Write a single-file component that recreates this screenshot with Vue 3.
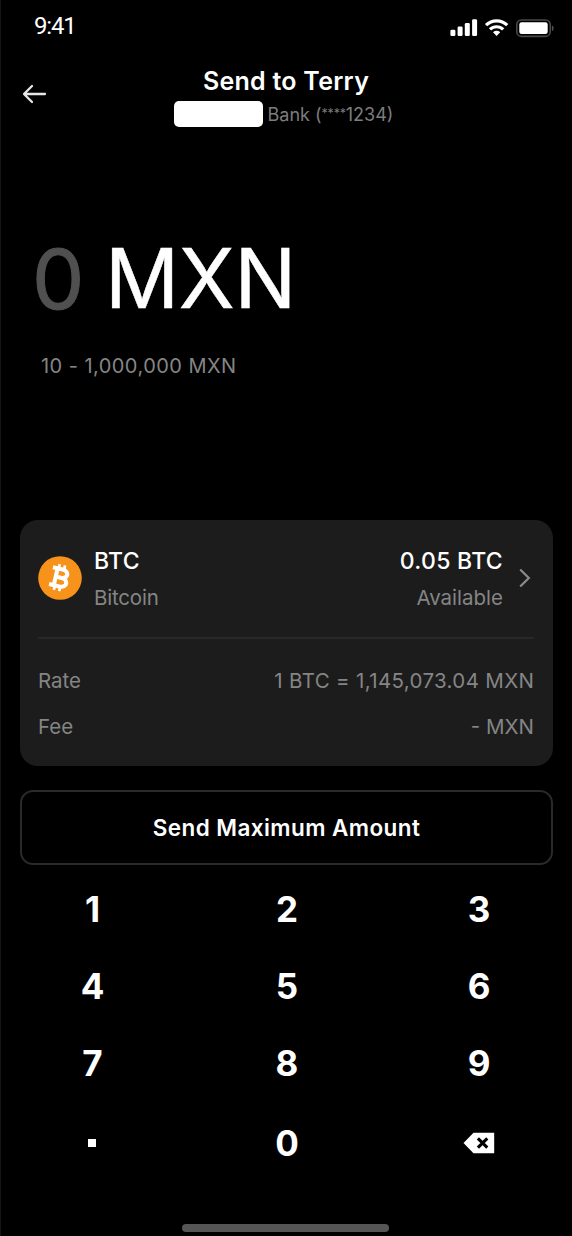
<script setup>
const keys = ['1', '2', '3', '4', '5', '6', '7', '8', '9']
</script>

<template>
  <main class="screen">
    <header class="status">
      <span class="time">9:41</span>
      <svg class="status-icons" width="105" height="20" viewBox="0 0 105 20" fill="#fff">
        <rect x="0.4" y="11.8" width="5" height="6.2" rx="1.3" />
        <rect x="7.6" y="8.5" width="5" height="9.5" rx="1.3" />
        <rect x="14.8" y="4.9" width="5" height="13.1" rx="1.3" />
        <rect x="22.1" y="1.2" width="5" height="16.8" rx="1.3" />
        <g fill="none" stroke="#fff" stroke-width="3.2">
          <path d="M36 7.1a15.2 15.2 0 0 1 21.2 0" />
          <path d="M40 11.4a9.5 9.5 0 0 1 13.2 0" />
        </g>
        <path d="M43 14.2a5.2 5.2 0 0 1 7.2 0L46.6 18Z" />
        <rect x="66.8" y="2" width="33.4" height="16.4" rx="4.7" fill="none" stroke="#484848" stroke-width="1.6" />
        <rect x="69.3" y="4.3" width="28.4" height="11.8" rx="2.3" />
        <path d="M101.9 7.4c2.2.7 2.2 4.9 0 5.6Z" fill="#555" />
      </svg>
    </header>

    <section class="top">
      <svg class="back" width="28" height="24" viewBox="0 0 28 24" fill="none" stroke="#e6e6e6" stroke-width="2.3" stroke-linecap="round" stroke-linejoin="round">
        <path d="M12 4 4 12l8 8M4.5 12H25" />
      </svg>
      <div class="heading">
        <h1>Send to Terry</h1>
        <p class="bank"><i class="mask"></i><span>Bank (<span class="stars">****</span>1234)</span></p>
      </div>
    </section>

    <section class="amount">
      <div class="big"><span class="zero">0</span><span class="currency">MXN</span></div>
      <p class="range">10 - 1,000,000 MXN</p>
    </section>

    <section class="card">
      <div class="asset">
        <svg class="coin" width="44" height="44" viewBox="0 0 44 44">
          <circle cx="22" cy="22" r="21.8" fill="#f7931a" />
          <g transform="translate(21.2 21.6) rotate(13)" fill="none" stroke="#fff">
            <path d="M-8.4-8.6H1.5C9-8.6 9-.2 1.5-.2H-3.5M1.5-.2C10.3-.2 10.3 8.6 2 8.6H-8.4M-3.6-8.6V8.6" stroke-width="4.1" />
            <path d="M-2.5-13.2V-8M3-13.2V-8M-2.5 8V13.2M3 8V13.2" stroke-width="2.7" />
          </g>
        </svg>
        <div class="names"><b class="btc">BTC</b><span class="bitcoin">Bitcoin</span></div>
        <div class="balance"><b class="value">0.05 BTC</b><span class="available">Available</span></div>
        <svg class="chevron" width="14" height="22" viewBox="0 0 14 22" fill="none" stroke="#8b8b8b" stroke-width="2.2">
          <path d="m2.2 2.5 8.6 8.5-8.6 8.5" />
        </svg>
      </div>
      <div class="row"><span class="rate">Rate</span><span class="rate-value">1 BTC = 1,145,073.04 MXN</span></div>
      <div class="row"><span class="fee">Fee</span><span class="fee-value">- MXN</span></div>
    </section>

    <button class="max">Send Maximum Amount</button>

    <section class="pad">
      <button v-for="k in keys" :key="k" class="key">{{ k }}</button>
      <button class="key last"><i class="dot"></i></button>
      <button class="key last">0</button>
      <button class="key last">
        <svg class="erase" width="32" height="22" viewBox="0 0 32 22">
          <path d="M.5 11 10.5.8H31.2V21.2H10.5Z" fill="#fff" />
          <path d="m14.9 6.4 9.4 9.2m0-9.2-9.4 9.2" stroke="#000" stroke-width="3.1" />
        </svg>
      </button>
    </section>

    <footer class="home"><i></i></footer>
  </main>
</template>

<style>
body { background: #000; }
</style>

<style scoped>
* { box-sizing: border-box; }
h1, p { margin: 0; }
button { padding: 0; background: none; border: 0; color: inherit; font-family: inherit; }
.screen {
  width: 572px;
  height: 1236px;
  display: flex;
  flex-direction: column;
  overflow: hidden;
  background: #000;
  border-left: 1px solid #161616;
  color: #fff;
  font-family: Inter, "Liberation Sans", sans-serif;
  white-space: nowrap;
}
.status {
  height: 52px;
  display: flex;
  justify-content: space-between;
  padding: 0 17px 0 33px;
}
.time { font: 400 24px/52px Roboto, sans-serif; letter-spacing: -1.2px; }
.status-icons { margin-top: 18px; }
.top { height: 84px; display: flex; padding-left: 20px; }
.back { margin: 30px 0 0 -1px; flex: none; }
.heading { width: 220px; margin-left: 126px; display: flex; flex-direction: column; }
h1 { padding-left: 29px; font-size: 25px; font-weight: 600; line-height: 32px; margin-top: 13px; letter-spacing: 0.25px; }
.bank { display: flex; align-items: center; height: 26px; margin-top: 4px; color: #7d7d7d; font-size: 18px; }
.mask { width: 89px; height: 26px; flex: none; border-radius: 5px; background: #fff; margin-right: 4.5px; }
.stars { font-size: 12.5px; line-height: 1; vertical-align: 3px; letter-spacing: -0.2px; }
.amount { height: 383.5px; padding-top: 93px; }
.big { height: 100px; display: flex; padding-left: 31px; font-size: 82px; line-height: 100px; }
.zero { width: 73px; color: #505050; font-size: 83px; -webkit-text-stroke: 1px #505050; }
.currency { letter-spacing: -0.3px; -webkit-text-stroke: 0.5px #fff; }
.range { padding-left: 40px; margin-top: 22px; font-size: 20px; line-height: 30px; color: #858585; letter-spacing: 0.45px; }
.card {
  height: 246.5px;
  margin: 0 19px;
  padding: 0 19px 0 18px;
  border-radius: 18px;
  background: #1c1c1c;
  color: #858585;
  font-size: 20.5px;
}
.asset { height: 119px; display: flex; border-bottom: 2px solid #282828; margin-bottom: 19px; }
.coin { margin-top: 36.5px; flex: none; }
.names, .balance { display: flex; flex-direction: column; padding-top: 26.5px; }
.names span, .balance span { line-height: 36px; }
.names { margin-left: 12px; }
.balance { margin-left: auto; align-items: flex-end; }
.bitcoin { letter-spacing: -0.2px; }
b { color: #fff; font-size: 23px; font-weight: 500; line-height: 30px; height: 33.5px; letter-spacing: 0.3px; }
.chevron { margin: 47px 2px 0 15px; flex: none; }
.row { height: 46.5px; display: flex; justify-content: space-between; line-height: 46px; }
.rate-value { letter-spacing: 0.35px; margin-right: -0.35px; }
.max {
  height: 75px;
  flex: none;
  margin: 24px 19px 0;
  border: 2px solid #2a2a2a;
  border-radius: 13px;
  font-size: 22.5px;
  font-weight: 600;
  line-height: 69px;
  letter-spacing: 0.42px;
}
.pad {
  display: grid;
  grid-template-columns: 183px 206px 178px;
  grid-template-rows: 77px 77px 77px 83px;
  margin-top: 5.5px;
}
.key { display: flex; align-items: center; justify-content: center; font-size: 35px; font-weight: 700; }
.dot { width: 8px; height: 8px; background: #fff; }
.dot, .erase { margin-right: 1px; }
.home { display: flex; justify-content: center; margin: 39px 2px 0 0; }
.home i { width: 207px; height: 8px; border-radius: 4px; background: #555; }
</style>
